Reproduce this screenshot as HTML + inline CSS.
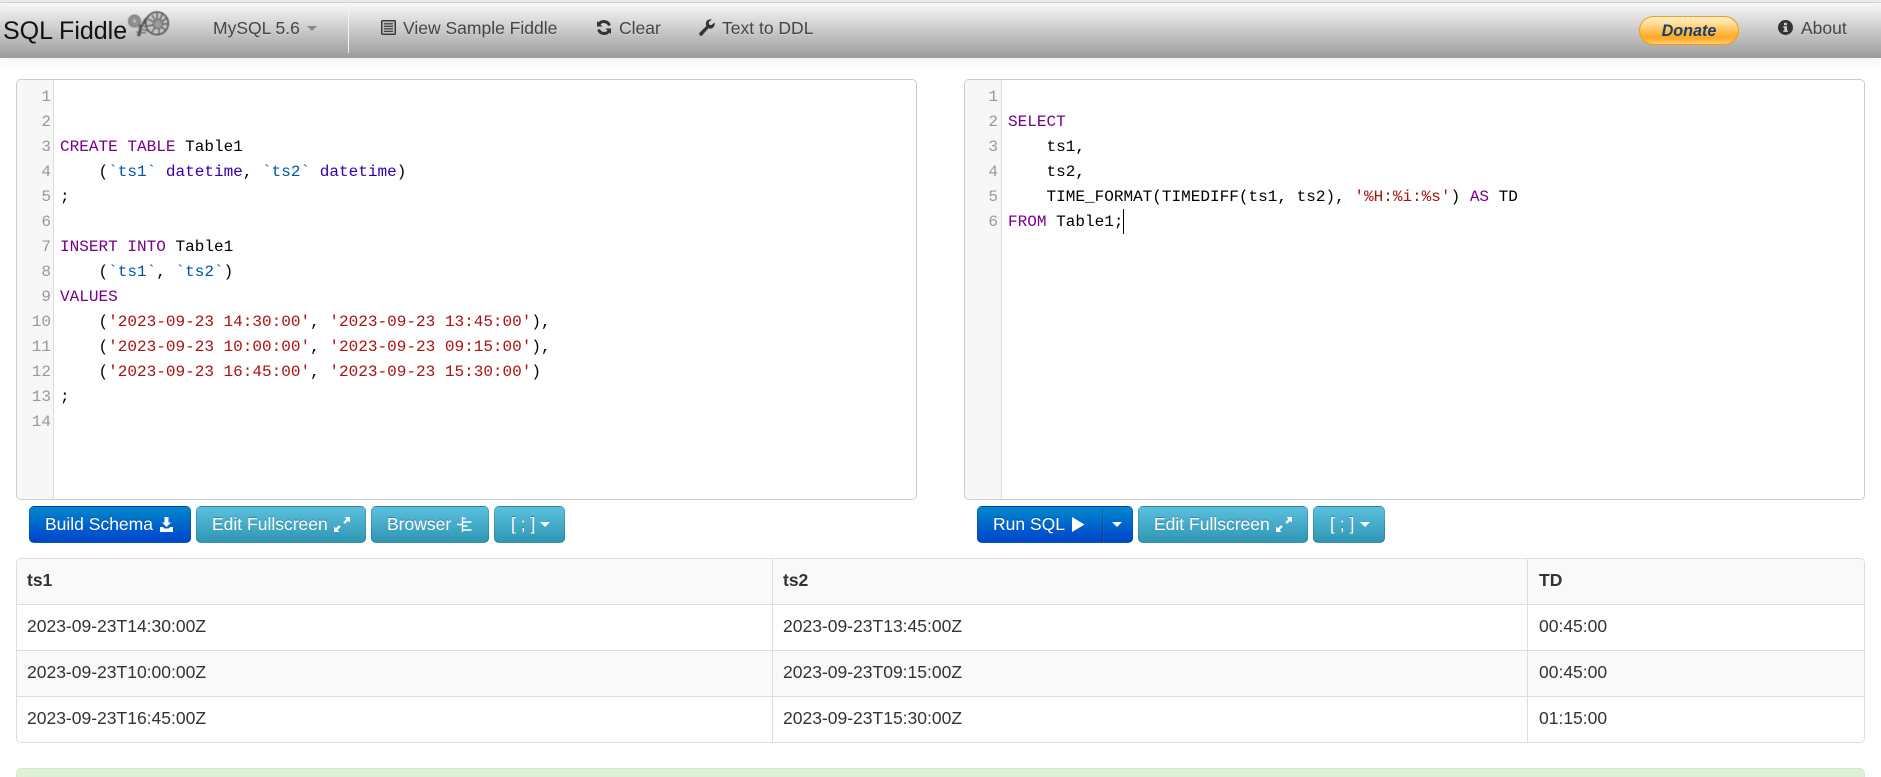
<!DOCTYPE html>
<html lang="en">
<head>
<meta charset="utf-8">
<title>SQL Fiddle</title>
<style>
html,body{margin:0;padding:0;width:1881px;height:777px;overflow:hidden;background:#fff}
body{position:relative;font-family:"Liberation Sans",Arial,sans-serif;font-size:17.5px;color:#333}
.t{position:absolute;white-space:nowrap}
svg{position:absolute;display:block}
#strip{position:absolute;left:0;top:0;width:1881px;height:3px;background:linear-gradient(#f0f0f0,#f0f0f0 60%,#c4c4c4)}
#nav{position:absolute;left:0;top:3px;width:1881px;height:55px;background:linear-gradient(#f8f8f8,#9b9b9b);box-shadow:0 1px 12px rgba(0,0,0,.08);border-bottom:0}
.n{color:#444;line-height:24px;top:16px;text-shadow:0 1px 0 rgba(255,255,255,.25)}
#divider{position:absolute;left:348px;top:3px;width:1px;height:50px;background:#f4f4f4}
#donate{position:absolute;left:1639px;top:16px;width:98px;height:27px;border:1px solid #f59a1e;border-radius:15px;background:linear-gradient(#fff0c8 0,#ffd98c 30%,#ffbb4c 55%,#ffa822 75%,#ffc86a 100%);color:#17406e;font:italic bold 16.2px/29px "Liberation Sans",Arial,sans-serif;text-align:center}
.ed{position:absolute;top:79px;height:419px;border:1px solid #ccc;border-radius:5px;background:#fff;overflow:hidden}
.gut{position:absolute;left:0;top:0;bottom:0;background:#f7f7f7;border-right:1px solid #ddd}
.nums,.code{position:absolute;top:5px;margin:0;font-family:"Liberation Mono","DejaVu Sans Mono",monospace;font-size:16.04px;line-height:25px;white-space:pre}
.nums{color:#999;text-align:right}
.code{color:#000}
.k{color:#708}.s{color:#a11}.b{color:#05a}.d{color:#30a}
.btn{position:absolute;top:506px;height:35px;line-height:34px;border:1px solid rgba(0,0,0,.12);border-bottom-color:rgba(0,0,0,.25);border-radius:5px;color:#fff;text-shadow:0 -1px 0 rgba(0,0,0,.25);box-sizing:content-box;white-space:nowrap;font-size:17.5px}
.pri{background:linear-gradient(#0088cc,#0044cc)}
.inf{background:linear-gradient(#5bc0de,#2f96b4)}
.btn span{position:absolute;top:0}
.car{position:absolute;width:0;height:0;border-left:5px solid transparent;border-right:5px solid transparent;border-top:5px solid #fff}
#tw{position:absolute;left:16px;top:558px;width:1847px;border:1px solid #ddd;border-radius:5px;overflow:hidden}
table{border-collapse:collapse;table-layout:fixed;width:1847px;font-size:17.5px;color:#333}
td,th{height:41px;padding:0 0 4px 10px;border-bottom:1px solid #ddd;border-right:1px solid #ddd;text-align:left;box-sizing:content-box;line-height:24px}
td:nth-child(2),th:nth-child(2){padding-left:10.500px}
td:nth-child(3),th:nth-child(3){padding-left:11.500px}
th{font-weight:bold;background:#f9f9f9}
tr:last-child td{border-bottom:0}
td:last-child,th:last-child{border-right:0}
tr.st td{background:#f9f9f9}
#ok{position:absolute;left:16px;top:768px;width:1847px;height:30px;background:#dff0d8;border:1px solid #d6e9c6;border-radius:5px}
</style>
</head>
<body>
<div id="strip"></div>
<div id="nav"></div>

<div class="t" style="left:3px;top:16px;font-size:25px;line-height:30px;color:#111">SQL Fiddle</div>
<svg style="left:120px;top:5px;filter:blur(.45px)" width="60" height="40" viewBox="0 0 60 40" fill="none">
  <circle cx="14.500" cy="16" r="5.800" fill="#969696" stroke="#707070" stroke-width="1.200"/>
  <circle cx="14.500" cy="16" r="2.600" fill="#b8b8b8" stroke="#7a7a7a"/>
  <path d="M19.500 20C21 24 21 28 19 31" stroke="#555" stroke-width="1.800"/>
  <path d="M18 31C20 24 23 16 29 11" stroke="#444" stroke-width="2"/>
  <path d="M16 27l10 1M18 23l10 3M20 20l9 3M22 17l8 4M24 14l7 5" stroke="#666" stroke-width="1.300"/>
  <circle cx="37" cy="18.300" r="11.300" fill="#c4c4c4" stroke="#505050" stroke-width="1.500"/>
  <circle cx="38" cy="19" r="4.800" fill="#9a9a9a" stroke="#666"/>
  <path d="M37 8v6M42.500 9l-2.500 5.500M47 13l-5 3.500M48 19l-5.500 0M45.500 25l-4-3M39 29v-5.500M32 27l3-4.500M27 21l6-1M28 14l5.500 3M32 10l3 5" stroke="#555" stroke-width="1.200"/>
</svg>

<div class="t n" style="left:213px">MySQL 5.6</div>
<div class="car" style="left:307px;top:26px;border-top-color:#888"></div>
<div id="divider"></div>

<svg style="left:381px;top:20px" width="15" height="15" viewBox="0 0 15 15">
  <rect x="0.700" y="0.700" width="13.600" height="13.600" rx="1" fill="#bdbdbd" stroke="#333" stroke-width="1.400"/>
  <path d="M3 3.800h9M3 6.300h9M3 8.800h9M3 11.300h9" stroke="#333" stroke-width="1.100"/>
</svg>
<div class="t n" style="left:403px">View Sample Fiddle</div>

<svg style="left:596px;top:20px" width="16" height="15" viewBox="0 0 16 15" fill="none">
  <path d="M13.500 5.500A6 6 0 0 0 3 4" stroke="#333" stroke-width="3"/>
  <path d="M1 1v5.500h5.500z" fill="#333"/>
  <path d="M2.500 9.500A6 6 0 0 0 13 11" stroke="#333" stroke-width="3"/>
  <path d="M15 14V8.500H9.500z" fill="#333"/>
</svg>
<div class="t n" style="left:619px">Clear</div>

<svg style="left:699px;top:19px" width="16" height="17" viewBox="0 0 16 17">
  <path d="M15.500 3.500L12.300 6.300 10 5.500 9.700 3 12.800 .6C10.500-.2 7.600 1 7 3.500 6.700 5 7 6 7.400 7L.8 13.500C0 14.500 0 15.500 .8 16.200 1.500 17 2.500 17 3.300 16.200L9.500 9.300C10.500 9.700 11.500 9.800 12.700 9.400 15 8.500 16.200 6 15.500 3.500Z" fill="#333"/>
</svg>
<div class="t n" style="left:722px">Text to DDL</div>

<div id="donate">Donate</div>

<svg style="left:1778px;top:20px" width="15" height="15" viewBox="0 0 15 15">
  <circle cx="7.500" cy="7.500" r="7.500" fill="#333"/>
  <rect x="6" y="2.800" width="3" height="2.400" fill="#ccc"/>
  <path d="M5.300 6.300H9v4.200h1v1.400H5.300v-1.400h1V7.700h-1z" fill="#ccc"/>
</svg>
<div class="t n" style="left:1801px">About</div>

<!-- left editor -->
<div class="ed" style="left:16px;width:899px">
  <div class="gut" style="width:36px"></div>
  <pre class="nums" style="left:0;width:34px">
1
2
3
4
5
6
7
8
9
10
11
12
13
14</pre>
<pre class="code" style="left:43px">


<span class="k">CREATE</span> <span class="k">TABLE</span> Table1
    (<span class="b">`ts1`</span> <span class="d">datetime</span>, <span class="b">`ts2`</span> <span class="d">datetime</span>)
;

<span class="k">INSERT</span> <span class="k">INTO</span> Table1
    (<span class="b">`ts1`</span>, <span class="b">`ts2`</span>)
<span class="k">VALUES</span>
    (<span class="s">'2023-09-23 14:30:00'</span>, <span class="s">'2023-09-23 13:45:00'</span>),
    (<span class="s">'2023-09-23 10:00:00'</span>, <span class="s">'2023-09-23 09:15:00'</span>),
    (<span class="s">'2023-09-23 16:45:00'</span>, <span class="s">'2023-09-23 15:30:00'</span>)
;
</pre>
</div>

<!-- right editor -->
<div class="ed" style="left:964px;width:899px">
  <div class="gut" style="width:36px"></div>
  <pre class="nums" style="left:0;width:33px">
1
2
3
4
5
6</pre>
<pre class="code" style="left:43px">

<span class="k">SELECT</span>
    ts1,
    ts2,
    TIME_FORMAT(TIMEDIFF(ts1, ts2), <span class="s">'%H:%i:%s'</span>) <span class="k">AS</span> TD
<span class="k">FROM</span> Table1;</pre>
  <div style="position:absolute;left:158px;top:129px;width:1px;height:25px;background:#000"></div>
</div>

<!-- left buttons -->
<div class="btn pri" style="left:29px;width:160px"><span style="left:15px">Build Schema</span>
  <svg style="left:129px;top:10px" width="15" height="15" viewBox="0 0 15 15"><path d="M5.500 0h4v5.500h2.500L7.500 10 3 5.500h2.500zM1 10h3l1.500 1.500h4L11 10h3v5H1z" fill="#fff"/></svg>
</div>
<div class="btn inf" style="left:196px;width:168px"><span style="left:15px">Edit Fullscreen</span>
  <svg style="left:137px;top:10px" width="16" height="15" viewBox="0 0 16 15"><path d="M10.500 0H16v5.500l-1.800-1.800-3.200 3.200-1.700-1.700 3.200-3.200zM5.500 15H0V9.500l1.800 1.800 3.200-3.200 1.700 1.700-3.200 3.200z" fill="#fff"/></svg>
</div>
<div class="btn inf" style="left:371px;width:116px"><span style="left:15px">Browser</span>
  <svg style="left:85px;top:10px" width="16" height="15" viewBox="0 0 16 15"><path d="M5.500 0v15M0 7.500h5.500M5.500 1.500h3M5.500 5h9M5.500 9h5M5.500 13h9" stroke="#fff" stroke-width="1.400" fill="none"/></svg>
</div>
<div class="btn inf" style="left:494px;width:69px"><span style="left:16px">[ ; ]</span>
  <div class="car" style="left:45px;top:15px"></div>
</div>

<!-- right buttons -->
<div class="btn pri" style="left:977px;width:154px">
  <span style="left:15px">Run SQL</span>
  <svg style="left:94px;top:10px" width="13" height="15" viewBox="0 0 13 15"><path d="M0 0l12.500 7.500L0 15z" fill="#fff"/></svg>
  <div style="position:absolute;left:124px;top:0;width:1px;height:35px;background:rgba(0,0,0,.15);border-right:1px solid rgba(255,255,255,.1)"></div>
  <div class="car" style="left:134px;top:15px"></div>
</div>
<div class="btn inf" style="left:1138px;width:168px"><span style="left:15px">Edit Fullscreen</span>
  <svg style="left:137px;top:10px" width="16" height="15" viewBox="0 0 16 15"><path d="M10.500 0H16v5.500l-1.800-1.800-3.200 3.200-1.700-1.700 3.200-3.200zM5.500 15H0V9.500l1.800 1.800 3.200-3.200 1.700 1.700-3.200 3.200z" fill="#fff"/></svg>
</div>
<div class="btn inf" style="left:1313px;width:70px"><span style="left:16px">[ ; ]</span>
  <div class="car" style="left:46px;top:15px"></div>
</div>

<!-- results -->
<div id="tw">
<table>
<colgroup><col style="width:755px"><col style="width:755px"><col style="width:337px"></colgroup>
<tr><th>ts1</th><th>ts2</th><th>TD</th></tr>
<tr><td>2023-09-23T14:30:00Z</td><td>2023-09-23T13:45:00Z</td><td>00:45:00</td></tr>
<tr class="st"><td>2023-09-23T10:00:00Z</td><td>2023-09-23T09:15:00Z</td><td>00:45:00</td></tr>
<tr><td>2023-09-23T16:45:00Z</td><td>2023-09-23T15:30:00Z</td><td>01:15:00</td></tr>
</table>
</div>

<div id="ok"></div>
</body>
</html>
